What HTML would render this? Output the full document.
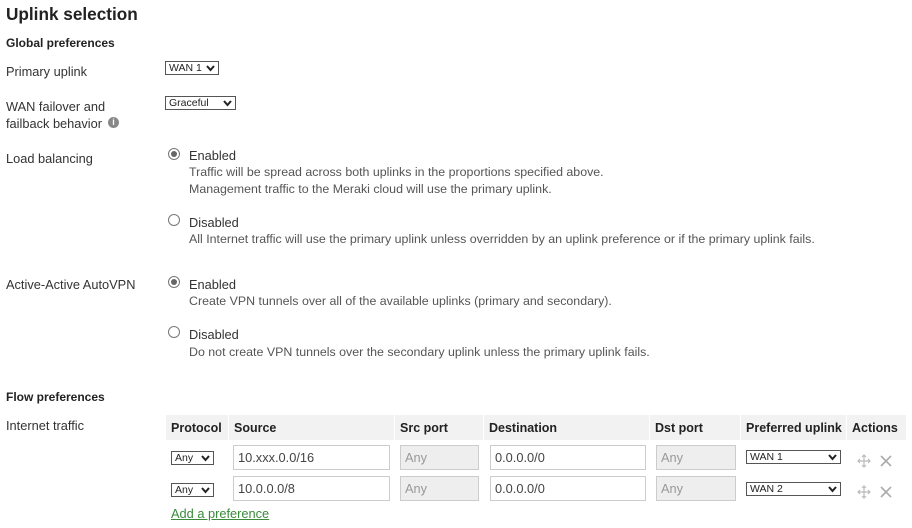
<!DOCTYPE html>
<html><head><style>
body{margin:0;width:912px;height:528px;background:#fff;font-family:"Liberation Sans",sans-serif;color:#222;position:relative;overflow:hidden}
.a{position:absolute;white-space:nowrap}
.l{font-size:12.8px;color:#333}
.d{font-size:12.4px;color:#555}
.b{font-weight:bold;font-size:12px;color:#222}
.sel{position:absolute;border:1px solid #555;background:#fff;font-size:10.5px;color:#222;box-sizing:border-box;height:14px;line-height:12px;padding-left:3px}
.sel svg{position:absolute;right:3px;top:3px}
.radio{position:absolute;width:12px;height:12px;border:1px solid #777;border-radius:50%;box-sizing:border-box;background:#fff}
.radio.on::after{content:"";position:absolute;left:2px;top:2px;width:6px;height:6px;border-radius:50%;background:#666}
.th{position:absolute;top:415px;height:25px;background:#f2f2f2;font-weight:bold;font-size:12.5px;line-height:26px;padding-left:5px;box-sizing:border-box;color:#222}
.in{position:absolute;height:25px;border:1px solid #ccc;box-sizing:border-box;font-size:12.8px;line-height:24px;padding-left:4px;color:#444}
.in.g{background:#eee;color:#999}
</style></head><body>
<div class="a" style="left:6px;top:4px;font-size:17.2px;font-weight:bold;color:#222">Uplink selection</div>
<div class="a b" style="left:6px;top:36px">Global preferences</div>
<div class="a l" style="left:6px;top:64px">Primary uplink</div>
<div class="sel" style="left:165px;top:61px;width:54px">WAN 1<svg width="9" height="7" viewBox="0 0 9 7"><path d="M1 1l3.5 4L8 1" stroke="#222" stroke-width="2" fill="none"/></svg></div>
<div class="a l" style="left:6px;top:99px">WAN failover and</div>
<div class="a l" style="left:6px;top:116px">failback behavior</div>
<div class="a" style="left:108px;top:117px;width:11px;height:11px;border-radius:50%;background:#888;color:#fff;font-size:9px;font-weight:bold;text-align:center;line-height:11px">i</div>
<div class="sel" style="left:165px;top:96px;width:71px">Graceful<svg width="9" height="7" viewBox="0 0 9 7"><path d="M1 1l3.5 4L8 1" stroke="#222" stroke-width="2" fill="none"/></svg></div>
<div class="a l" style="left:6px;top:151px">Load balancing</div>
<div class="radio on" style="left:168px;top:148px"></div>
<div class="a l" style="left:189px;top:148px">Enabled</div>
<div class="a d" style="left:189px;top:165px">Traffic will be spread across both uplinks in the proportions specified above.</div>
<div class="a d" style="left:189px;top:182px">Management traffic to the Meraki cloud will use the primary uplink.</div>
<div class="radio" style="left:168px;top:214px"></div>
<div class="a l" style="left:189px;top:215px">Disabled</div>
<div class="a d" style="left:189px;top:232px">All Internet traffic will use the primary uplink unless overridden by an uplink preference or if the primary uplink fails.</div>
<div class="a l" style="left:6px;top:277px">Active-Active AutoVPN</div>
<div class="radio on" style="left:168px;top:276px"></div>
<div class="a l" style="left:189px;top:277px">Enabled</div>
<div class="a d" style="left:189px;top:294px">Create VPN tunnels over all of the available uplinks (primary and secondary).</div>
<div class="radio" style="left:168px;top:326px"></div>
<div class="a l" style="left:189px;top:327px">Disabled</div>
<div class="a d" style="left:189px;top:345px">Do not create VPN tunnels over the secondary uplink unless the primary uplink fails.</div>
<div class="a b" style="left:6px;top:390px">Flow preferences</div>
<div class="a l" style="left:6px;top:418px">Internet traffic</div>
<div class="th" style="left:166px;width:62px">Protocol</div>
<div class="th" style="left:229px;width:165px">Source</div>
<div class="th" style="left:395px;width:88px">Src port</div>
<div class="th" style="left:484px;width:165px">Destination</div>
<div class="th" style="left:650px;width:90px">Dst port</div>
<div class="th" style="left:741px;width:105px">Preferred uplink</div>
<div class="th" style="left:847px;width:59px">Actions</div>

<div class="sel" style="left:171px;top:451px;width:43px">Any<svg width="9" height="7" viewBox="0 0 9 7"><path d="M1 1l3.5 4L8 1" stroke="#222" stroke-width="2" fill="none"/></svg></div>
<div class="in" style="left:233px;top:445px;width:157px">10.xxx.0.0/16</div>
<div class="in g" style="left:400px;top:445px;width:79px">Any</div>
<div class="in" style="left:490px;top:445px;width:156px">0.0.0.0/0</div>
<div class="in g" style="left:656px;top:445px;width:80px">Any</div>
<div class="sel" style="left:746px;top:450px;width:95px">WAN 1<svg width="9" height="7" viewBox="0 0 9 7"><path d="M1 1l3.5 4L8 1" stroke="#222" stroke-width="2" fill="none"/></svg></div>
<div class="sel" style="left:171px;top:483px;width:43px">Any<svg width="9" height="7" viewBox="0 0 9 7"><path d="M1 1l3.5 4L8 1" stroke="#222" stroke-width="2" fill="none"/></svg></div>
<div class="in" style="left:233px;top:476px;width:157px">10.0.0.0/8</div>
<div class="in g" style="left:400px;top:476px;width:79px">Any</div>
<div class="in" style="left:490px;top:476px;width:156px">0.0.0.0/0</div>
<div class="in g" style="left:656px;top:476px;width:80px">Any</div>
<div class="sel" style="left:746px;top:482px;width:95px">WAN 2<svg width="9" height="7" viewBox="0 0 9 7"><path d="M1 1l3.5 4L8 1" stroke="#222" stroke-width="2" fill="none"/></svg></div>
<svg class="a" style="left:856px;top:453px" width="16" height="16" viewBox="0 0 16 16"><path d="M8 2v12M2 8h12M6 4l2-2 2 2M6 12l2 2 2-2M4 6l-2 2 2 2M12 6l2 2-2 2" stroke="#bbb" stroke-width="1.2" fill="none"/></svg>
<svg class="a" style="left:880px;top:455px" width="12" height="12" viewBox="0 0 12 12"><path d="M1 1l10 10M11 1L1 11" stroke="#aaa" stroke-width="1.6"/></svg>
<svg class="a" style="left:856px;top:484px" width="16" height="16" viewBox="0 0 16 16"><path d="M8 2v12M2 8h12M6 4l2-2 2 2M6 12l2 2 2-2M4 6l-2 2 2 2M12 6l2 2-2 2" stroke="#bbb" stroke-width="1.2" fill="none"/></svg>
<svg class="a" style="left:880px;top:486px" width="12" height="12" viewBox="0 0 12 12"><path d="M1 1l10 10M11 1L1 11" stroke="#aaa" stroke-width="1.6"/></svg>
<div class="a" style="left:171px;top:506px;font-size:12.8px;color:#3a8a3a;text-decoration:underline">Add a preference</div>
</body></html>
